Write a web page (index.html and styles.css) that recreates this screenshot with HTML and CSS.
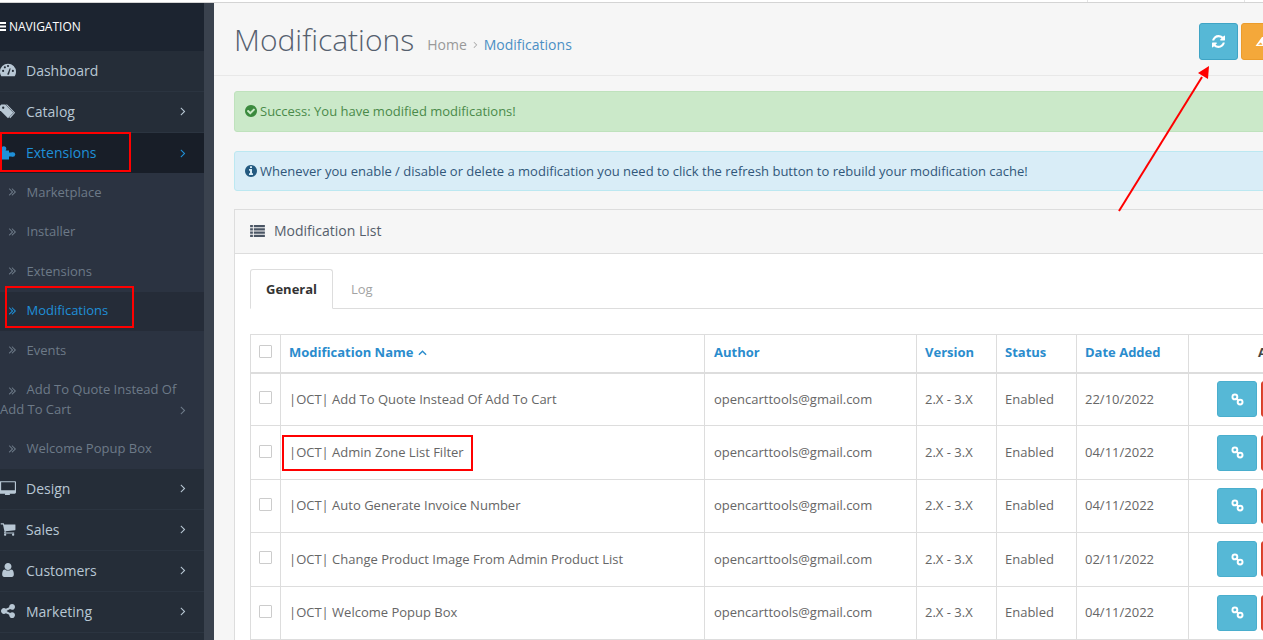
FILE: index.html
```html
<!DOCTYPE html>
<html>
<head>
    <meta charset="UTF-8">
    <meta name="viewport" content="width=device-width">
    <title>Modifications</title>
    <link rel="stylesheet" href="styles.css">
</head>
<body>
<svg width="0" height="0" class="defs">
    <symbol id="i-angle" viewBox="0 0 1792 1792"><path d="M1171 960q0 13-10 23l-466 466q-10 10-23 10t-23-10l-50-50q-10-10-10-23t10-23l393-393-393-393q-10-10-10-23t10-23l50-50q10-10 23-10t23 10l466 466q10 10 10 23z"/></symbol>
    <symbol id="i-double" viewBox="0 0 1792 1792"><path d="M979 960q0 13-10 23l-466 466q-10 10-23 10t-23-10l-50-50q-10-10-10-23t10-23l393-393-393-393q-10-10-10-23t10-23l50-50q10-10 23-10t23 10l466 466q10 10 10 23zm384 0q0 13-10 23l-466 466q-10 10-23 10t-23-10l-50-50q-10-10-10-23t10-23l393-393-393-393q-10-10-10-23t10-23l50-50q10-10 23-10t23 10l466 466q10 10 10 23z"/></symbol>
    <symbol id="i-link" viewBox="0 0 16 16"><g fill="none" stroke="currentColor" stroke-width="2.400"><circle cx="4.800" cy="4.800" r="3"/><circle cx="11.200" cy="11.200" r="3"/><path d="M6 6l4 4"/></g></symbol>
</svg>

<div class="topbar"><span class="top-sep first"></span><span class="top-sep"></span></div>

<div class="layout">
    <nav class="sidebar">
        <div class="nav-title">
            <svg class="bars" viewBox="0 0 6 9"><rect y="0" width="6" height="2"/><rect y="3.500" width="6" height="2"/><rect y="7" width="6" height="2"/></svg>
            NAVIGATION
        </div>
        <a class="nav-item">
            <svg class="nav-icon" viewBox="0 0 18 14"><path d="M9 0a9 9 0 0 0-9 9c0 2 .6 3.6 1.500 5h15c.9-1.400 1.500-3 1.500-5a9 9 0 0 0-9-9z"/><g fill="#252d38"><circle cx="3.500" cy="8" r="1.200"/><circle cx="5.500" cy="4" r="1.200"/><circle cx="9" cy="2.500" r="1.200"/><circle cx="14.500" cy="8" r="1.200"/><path d="M8 12l3-7 1 .4-2 7z"/></g></svg>
            <span class="nav-label">Dashboard</span>
        </a>
        <a class="nav-item">
            <svg class="nav-icon tag" viewBox="0 0 18 16"><path d="M0 1.500v5l9 9 6-6-9-9.500H1.500z"/><circle cx="3.600" cy="3.800" r="1.300" fill="#252d38"/><path d="M8 0l9 9.500-5.500 6-1-1 5-5-9-9.500z"/></svg>
            <span class="nav-label">Catalog</span>
            <svg class="caret"><use href="#i-angle"/></svg>
        </a>
        <a class="nav-item active">
            <svg class="nav-icon" viewBox="0 0 16 14"><circle cx="3.800" cy="2.800" r="2.500"/><rect x="2" y="4.500" width="7" height="9"/><rect x="8" y="6.500" width="5" height="4"/><circle cx="13" cy="8.500" r="2.200"/></svg>
            <span class="nav-label">Extensions</span>
            <svg class="caret"><use href="#i-angle"/></svg>
        </a>
        <div class="subnav">
            <a class="sub-item"><svg class="dbl"><use href="#i-double"/></svg>Marketplace</a>
            <a class="sub-item"><svg class="dbl"><use href="#i-double"/></svg>Installer</a>
            <a class="sub-item"><svg class="dbl"><use href="#i-double"/></svg>Extensions</a>
            <a class="sub-item current"><svg class="dbl"><use href="#i-double"/></svg>Modifications</a>
            <a class="sub-item"><svg class="dbl"><use href="#i-double"/></svg>Events</a>
            <a class="sub-item multi"><span class="first-line"><svg class="dbl"><use href="#i-double"/></svg>Add To Quote Instead Of</span><br>Add To Cart<svg class="caret sub-caret"><use href="#i-angle"/></svg></a>
            <a class="sub-item"><svg class="dbl"><use href="#i-double"/></svg>Welcome Popup Box</a>
        </div>
        <a class="nav-item">
            <svg class="nav-icon" viewBox="0 0 1792 1536"><path d="M1664 992v-832q0-13-9.500-22.500t-22.500-9.500h-1472q-13 0-22.500 9.500t-9.500 22.500v832q0 13 9.500 22.500t22.500 9.500h1472q13 0 22.500-9.500t9.500-22.500zm128-832v1088q0 66-47 113t-113 47h-544q0 37 16 77.500t32 71 16 43.500q0 26-19 45t-45 19h-512q-26 0-45-19t-19-45q0-14 16-44t32-70 16-78h-544q-66 0-113-47t-47-113v-1088q0-66 47-113t113-47h1632q66 0 113 47t47 113z"/></svg>
            <span class="nav-label">Design</span>
            <svg class="caret"><use href="#i-angle"/></svg>
        </a>
        <a class="nav-item">
            <svg class="nav-icon" viewBox="0 128 1792 1536"><path d="M704 1536q0 52-38 90t-90 38-90-38-38-90 38-90 90-38 90 38 38 90zm896 0q0 52-38 90t-90 38-90-38-38-90 38-90 90-38 90 38 38 90zm128-1088v512q0 24-16.500 42.500t-40.500 21.500l-1044 122q13 60 13 70 0 16-24 64h920q26 0 45 19t19 45-19 45-45 19h-1024q-26 0-45-19t-19-45q0-11 8-31.500t16-36 21.500-40 15.500-29.500l-177-823h-204q-26 0-45-19t-19-45 19-45 45-19h256q16 0 28.500 6.500t19.500 15.500 13 24.500 8 26 5.500 29.500 4.500 26h1201q26 0 45 19t19 45z"/></svg>
            <span class="nav-label">Sales</span>
            <svg class="caret"><use href="#i-angle"/></svg>
        </a>
        <a class="nav-item">
            <svg class="nav-icon" viewBox="128 128 1536 1536"><path d="M1536 1399q0 109-62.500 187t-150.500 78h-854q-88 0-150.500-78t-62.500-187q0-85 8.500-160.500t31.500-152 58.500-131 94-89 134.500-34.500q131 128 313 128t313-128q76 0 134.500 34.500t94 89 58.500 131 31.500 152 8.500 160.500zm-256-887q0 159-112.500 271.500t-271.500 112.500-271.500-112.500-112.500-271.500 112.500-271.500 271.500-112.500 271.500 112.500 112.500 271.500z"/></svg>
            <span class="nav-label">Customers</span>
            <svg class="caret"><use href="#i-angle"/></svg>
        </a>
        <a class="nav-item">
            <svg class="nav-icon" viewBox="128 128 1536 1536"><path d="M1344 1024q133 0 226.500 93.500t93.500 226.500-93.500 226.500-226.500 93.500-226.500-93.500-93.500-226.500q0-12 2-34l-360-180q-92 86-218 86-133 0-226.500-93.500t-93.500-226.500 93.500-226.500 226.500-93.500q126 0 218 86l360-180q-2-22-2-34 0-133 93.500-226.500t226.500-93.500 226.500 93.500 93.500 226.500-93.500 226.500-226.500 93.500q-126 0-218-86l-360 180q2 22 2 34t-2 34l360 180q92-86 218-86z"/></svg>
            <span class="nav-label">Marketing</span>
            <svg class="caret"><use href="#i-angle"/></svg>
        </a>
    </nav>
    <div class="gutter"></div>

    <main class="content">
        <header class="page-header">
            <h1>Modifications</h1>
            <span class="crumb">Home</span>
            <svg class="crumb-sep"><use href="#i-angle"/></svg>
            <span class="crumb link">Modifications</span>
            <div class="actions">
                <button class="btn btn-info"><svg viewBox="128 128 1536 1536"><path d="M1639 1056q0 5-1 7-64 268-268 434.500t-478 166.500q-146 0-282.500-55t-243.500-157l-129 129q-19 19-45 19t-45-19-19-45v-448q0-26 19-45t45-19h448q26 0 45 19t19 45-19 45l-137 137q71 66 161 102t187 36q134 0 250-65t186-179q11-17 53-117 8-23 30-23h192q13 0 22.500 9.500t9.500 22.500zm25-800v448q0 26-19 45t-45 19h-448q-26 0-45-19t-19-45 19-45l138-138q-148-137-349-137-134 0-250 65t-186 179q-11 17-53 117-8 23-30 23h-199q-13 0-22.500-9.500t-9.500-22.500v-7q65-268 270-434.500t480-166.500q146 0 284 55.500t245 156.500l130-129q19-19 45-19t45 19 19 45z"/></svg></button>
                <button class="btn btn-warning"><svg class="eraser" viewBox="0 0 16 12"><path fill-rule="evenodd" d="M2.500 10L9 1h6v9zM5 8.800h4.500L7.800 6.400z"/></svg></button>
            </div>
        </header>

        <div class="page-body">
            <div class="alert alert-success">
                <svg viewBox="128 128 1536 1536"><path d="M1412 734q0-28-18-46l-91-90q-19-19-45-19t-45 19l-408 407-226-226q-19-19-45-19t-45 19l-91 90q-18 18-18 46 0 27 18 45l362 362q19 19 45 19 27 0 46-19l543-543q18-18 18-45zm252 162q0 209-103 385.500t-279.500 279.500-385.500 103-385.500-103-279.500-279.500-103-385.500 103-385.500 279.500-279.500 385.500-103 385.500 103 279.500 279.500 103 385.500z"/></svg>
                Success: You have modified modifications!
            </div>
            <div class="alert alert-info">
                <svg viewBox="128 128 1536 1536"><path d="M1152 1376v-160q0-14-9-23t-23-9h-96v-512q0-14-9-23t-23-9h-320q-14 0-23 9t-9 23v160q0 14 9 23t23 9h96v320h-96q-14 0-23 9t-9 23v160q0 14 9 23t23 9h448q14 0 23-9t9-23zm-128-896v-160q0-14-9-23t-23-9h-192q-14 0-23 9t-9 23v160q0 14 9 23t23 9h192q14 0 23-9t9-23zm640 416q0 209-103 385.500t-279.500 279.500-385.500 103-385.500-103-279.500-279.500-103-385.500 103-385.500 279.500-279.500 385.500-103 385.500 103 279.500 279.500 103 385.500z"/></svg>
                Whenever you enable / disable or delete a modification you need to click the refresh button to rebuild your modification cache!
            </div>

            <section class="panel">
                <div class="panel-heading">
                    <svg class="list-icon" viewBox="0 0 16 13"><path d="M0 0h3v2.500H0zM4 0h12v2.500H4zM0 3.500h3V6H0zM4 3.500h12V6H4zM0 7h3v2.500H0zM4 7h12v2.500H4zM0 10.500h3V13H0zM4 10.500h12V13H4z"/></svg>
                    Modification List
                </div>
                <div class="panel-body">
                    <ul class="tabs">
                        <li class="tab on">General</li>
                        <li class="tab">Log</li>
                    </ul>
                    <table class="list">
                        <colgroup>
                            <col class="c-check"><col class="c-name"><col class="c-author"><col class="c-version"><col class="c-status"><col class="c-date"><col class="c-action">
                        </colgroup>
                        <thead>
                            <tr>
                                <th class="center"><span class="check"></span></th>
                                <th><a>Modification Name <svg class="sort" viewBox="0 0 10 6"><path d="M1 5l4-4 4 4" fill="none" stroke="currentColor" stroke-width="1.600"/></svg></a></th>
                                <th class="author"><a>Author</a></th>
                                <th><a>Version</a></th>
                                <th><a>Status</a></th>
                                <th><a>Date Added</a></th>
                                <th class="dark">Action</th>
                            </tr>
                        </thead>
                        <tbody>
                            <tr>
                                <td class="center"><span class="check"></span></td>
                                <td>|OCT| Add To Quote Instead Of Add To Cart</td>
                                <td class="author">opencarttools@gmail.com</td><td>2.X - 3.X</td><td>Enabled</td><td>22/10/2022</td>
                                <td class="act"><span class="btn-row"><button class="btn-sm blue"><svg><use href="#i-link"/></svg></button><button class="btn-sm red"></button></span></td>
                            </tr>
                            <tr>
                                <td class="center"><span class="check"></span></td>
                                <td>|OCT| Admin Zone List Filter</td>
                                <td class="author">opencarttools@gmail.com</td><td>2.X - 3.X</td><td>Enabled</td><td>04/11/2022</td>
                                <td class="act"><span class="btn-row"><button class="btn-sm blue"><svg><use href="#i-link"/></svg></button><button class="btn-sm red"></button></span></td>
                            </tr>
                            <tr>
                                <td class="center"><span class="check"></span></td>
                                <td>|OCT| Auto Generate Invoice Number</td>
                                <td class="author">opencarttools@gmail.com</td><td>2.X - 3.X</td><td>Enabled</td><td>04/11/2022</td>
                                <td class="act"><span class="btn-row"><button class="btn-sm blue"><svg><use href="#i-link"/></svg></button><button class="btn-sm red"></button></span></td>
                            </tr>
                            <tr>
                                <td class="center"><span class="check"></span></td>
                                <td>|OCT| Change Product Image From Admin Product List</td>
                                <td class="author">opencarttools@gmail.com</td><td>2.X - 3.X</td><td>Enabled</td><td>02/11/2022</td>
                                <td class="act"><span class="btn-row"><button class="btn-sm blue"><svg><use href="#i-link"/></svg></button><button class="btn-sm red"></button></span></td>
                            </tr>
                            <tr>
                                <td class="center"><span class="check"></span></td>
                                <td>|OCT| Welcome Popup Box</td>
                                <td class="author">opencarttools@gmail.com</td><td>2.X - 3.X</td><td>Enabled</td><td>04/11/2022</td>
                                <td class="act"><span class="btn-row"><button class="btn-sm blue"><svg><use href="#i-link"/></svg></button><button class="btn-sm red"></button></span></td>
                            </tr>
                        </tbody>
                    </table>
                </div>
            </section>
        </div>
    </main>
</div>

<!-- annotations drawn on top of the screenshot -->
<div class="mark mark-ext"></div>
<div class="mark mark-mod"></div>
<div class="mark mark-zone"></div>
<svg class="arrow" viewBox="0 0 1263 640"><path d="M1119 211L1202 77" stroke="#f00" stroke-width="2" fill="none"/><path d="M1209 66l-1 13-10-6z" fill="#f00"/></svg>
</body>
</html>
```

FILE: styles.css
```css
/* OpenCart admin, modifications page */

* {
    box-sizing: border-box;
}

html, body {
    height: 100%;
    margin: 0;
    overflow: hidden;
}

body {
    position: relative;
    display: flex;
    flex-direction: column;
    background: #f6f6f6;
    font-family: "Open Sans", sans-serif;
    font-size: 13px;
    color: #666;
}

.defs {
    position: absolute;
}

.topbar {
    display: flex;
    justify-content: flex-end;
    flex: none;
    height: 3px;
    background: #fff;
    border-bottom: 1px solid #d4d4d4;
    padding-right: 18px;
}

.top-sep {
    width: 1px;
    background: #e4e4e4;
    margin-left: 156px;
}

.layout {
    display: flex;
    flex: 1;
    min-height: 0;
}

/* sidebar */
.sidebar {
    flex: none;
    width: 204px;
    background: #252d38;
    overflow: hidden;
}

.gutter {
    flex: none;
    width: 10px;
    background: #3a424e;
}

.nav-title {
    display: flex;
    align-items: center;
    gap: 3px;
    height: 48px;
    background: #1c2430;
    color: #fff;
    font-size: 12px;
    padding-bottom: 1px;
}

.bars {
    width: 6px;
    height: 9px;
    fill: #fff;
}

.nav-item {
    display: flex;
    align-items: center;
    height: 41px;
    padding-right: 14px;
    padding-bottom: 2px;
    border-bottom: 1px solid #2b3440;
    color: #b8c7d4;
    font-size: 14px;
}

.nav-icon {
    flex: none;
    width: 16px;
    height: 14px;
    margin-right: 10px;
    fill: #b8c7d4;
}

.nav-icon.tag {
    height: 15px;
}

.nav-label {
    flex: 1;
}

.caret {
    flex: none;
    width: 14px;
    height: 14px;
    fill: currentColor;
}

.nav-item.active {
    height: 40px;
    padding-bottom: 0;
    background: #181e28;
    border-bottom-color: #181e28;
    color: #1f90d8;
}

.nav-item.active .nav-icon {
    fill: #1f90d8;
}

.subnav {
    background: #2b3341;
}

.sub-item {
    display: flex;
    align-items: center;
    height: 39.500px;
    padding-left: 6px;
    padding-bottom: 2px;
    color: #6d7a88;
}

.sub-item .dbl {
    flex: none;
    width: 13px;
    height: 13px;
    margin-right: 7.500px;
    fill: #6d7a88;
}

.sub-item.current {
    background: #252c38;
    color: #1f90d8;
}

.sub-item.current .dbl {
    fill: #1f90d8;
}

.sub-item.multi {
    display: block;
    position: relative;
    height: 59px;
    padding: 8px 14px 0 0;
    line-height: 20px;
}

.first-line {
    padding-left: 6px;
}

.sub-item.multi .dbl {
    vertical-align: -3px;
}

.sub-caret {
    position: absolute;
    right: 14px;
    top: 32px;
}

/* main column */
.content {
    flex: 1;
    min-width: 0;
    overflow: hidden;
}

.page-header {
    display: flex;
    align-items: center;
    height: 73px;
    padding: 0 20px;
    border-bottom: 1px solid #e8e8e8;
}

h1 {
    margin: 1px 13px 0 0;
    font-size: 30px;
    font-weight: 300;
    color: #55606e;
}

.crumb {
    font-size: 14px;
    color: #999;
    padding-top: 10px;
}

.crumb.link {
    color: #4b8fc4;
}

.crumb-sep {
    width: 11px;
    height: 11px;
    margin: 10px 3px 0 3px;
    fill: #aaa;
}

.actions {
    display: flex;
    gap: 3px;
    margin-left: auto;
    margin-right: -37px;
    margin-top: 5px;
}

.btn {
    width: 39px;
    height: 37px;
    padding: 0;
    border-radius: 3px;
    border: 1px solid #3fa4c5;
    display: flex;
    align-items: center;
    justify-content: center;
}

.btn svg {
    width: 13px;
    height: 13px;
    fill: #fff;
}

.btn svg.eraser {
    width: 16px;
    height: 12px;
    flex: none;
}

.btn-info {
    background: #56b8d6;
}

.btn-warning {
    background: #f4a83a;
    border-color: #eb9c2c;
}

.page-body {
    width: 1130px;
    padding: 15px 0 0 20px;
}

.alert {
    display: flex;
    align-items: center;
    gap: 3px;
    border-radius: 3px;
    border: 1px solid;
    padding-left: 10px;
    margin-bottom: 19px;
}

.alert svg {
    width: 12px;
    height: 12px;
}

.alert-success {
    height: 41px;
    padding-bottom: 2px;
    background: #cbe9c9;
    border-color: #bfe2bd;
    color: #4a8a4a;
}

.alert-success svg {
    fill: #3b8a3e;
}

.alert-info {
    height: 40px;
    margin-bottom: 18px;
    background: #d9edf7;
    border-color: #bce8f1;
    color: #31577a;
}

.alert-info svg {
    fill: #245a80;
}

.panel {
    border: 1px solid #ddd;
    border-bottom: 0;
    background: #fff;
}

.panel-heading {
    display: flex;
    align-items: center;
    height: 44px;
    padding-left: 15px;
    padding-bottom: 2px;
    background: #f6f6f6;
    border-bottom: 1px solid #ddd;
    font-size: 14px;
    color: #555f6c;
}

.list-icon {
    width: 15px;
    height: 12px;
    margin-right: 9px;
    fill: #4a5564;
}

.panel-body {
    padding: 15px 15px 0;
}

.tabs {
    display: flex;
    list-style: none;
    margin: 0 0 25px;
    padding: 0;
    height: 40px;
    border-bottom: 1px solid #ddd;
}

.tab {
    height: 40px;
    padding: 0 18px;
    line-height: 40px;
    color: #a3a3a3;
}

.tab.on {
    width: 83px;
    padding: 0 15px;
    height: 40px;
    background: #fff;
    color: #333;
    font-weight: 700;
    border: 1px solid #ddd;
    border-bottom-color: #fff;
    border-radius: 3px 3px 0 0;
    line-height: 38px;
}

.list {
    table-layout: fixed;
    border-collapse: collapse;
    width: 1100px;
}

.c-check { width: 30px; }
.c-name { width: 424px; }
.c-author { width: 212px; }
.c-version { width: 80px; }
.c-status { width: 80px; }
.c-date { width: 112px; }

.list th, .list td {
    border: 1px solid #ddd;
    padding: 0 8px 2px;
    text-align: left;
    white-space: nowrap;
}

.list td {
    height: 53.400px;
    padding-bottom: 1px;
}

.list .author {
    padding-left: 9px;
}

.list th {
    height: 38px;
    border-bottom-width: 2px;
    font-weight: 700;
    color: #2a8ccd;
}

.list .center {
    text-align: center;
    padding: 0;
}

.list th.dark {
    padding-left: 69px;
    color: #444;
}

.list td.act {
    padding: 0 0 0 28px;
}

.check {
    display: inline-block;
    width: 13px;
    height: 13px;
    background: #fff;
    border: 1px solid #ccc;
    border-radius: 1px;
    vertical-align: 0;
}

.sort {
    width: 9px;
    height: 6px;
    margin-left: 1px;
    vertical-align: 1px;
}

.btn-row {
    display: flex;
    gap: 4px;
}

.btn-sm {
    display: flex;
    align-items: center;
    justify-content: center;
    flex: none;
    width: 40px;
    height: 36px;
    padding: 0;
    border: 1px solid #4aaecd;
    border-radius: 3px;
}

.btn-sm svg {
    width: 13px;
    height: 13px;
    color: #fff;
}

.btn-sm.blue {
    background: #56b8d6;
}

.btn-sm.red {
    background: #e0452f;
    border-color: #d43f2a;
}

/* red annotations */
.mark {
    position: absolute;
    border: 2px solid #f00;
}

.mark-ext { left: 0; top: 132px; width: 131px; height: 40px; }
.mark-mod { left: 5px; top: 286px; width: 129px; height: 42px; }
.mark-zone { left: 282px; top: 435px; width: 191px; height: 36px; }

.arrow {
    position: absolute;
    left: 0;
    top: 0;
    width: 1263px;
    height: 640px;
    pointer-events: none;
}
```
